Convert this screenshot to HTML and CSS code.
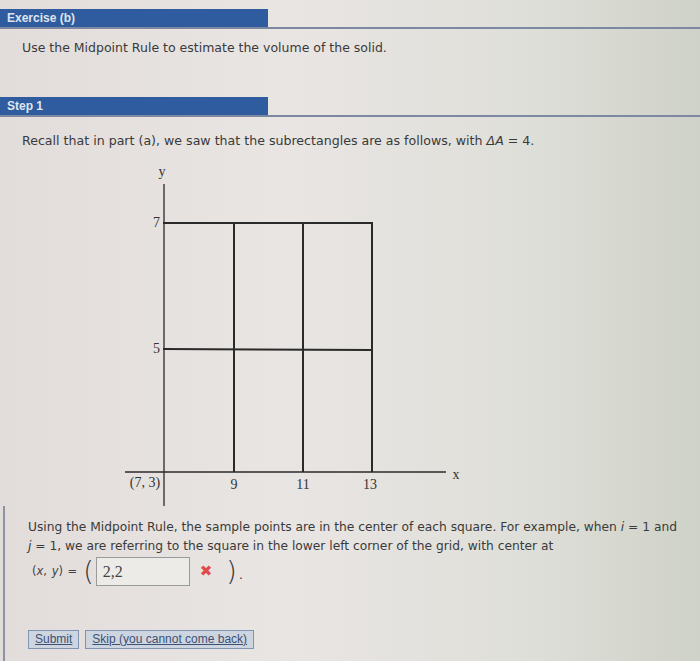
FILE: index.html
```html
<!DOCTYPE html>
<html>
<head>
<meta charset="utf-8">
<link rel="stylesheet" href="styles.css">
</head>
<body>
<div class="page">
  <div class="head"><div class="bar">Exercise (b)</div></div>
  <p class="intro">Use the Midpoint Rule to estimate the volume of the solid.</p>

  <div class="head step"><div class="bar">Step 1</div></div>
  <p class="recall">Recall that in part (a), we saw that the subrectangles are as follows, with <i>ΔA</i> = 4.</p>

  <svg class="graph" width="700" height="346" viewBox="0 160 700 346">
    <g stroke="#2a2a2a" fill="none">
      <line x1="164" y1="184" x2="164" y2="506" stroke-width="1.3"/>
      <line x1="125" y1="472" x2="446" y2="472" stroke-width="1.3"/>
      <line x1="163" y1="223" x2="373" y2="223" stroke-width="2"/>
      <line x1="163" y1="349" x2="372" y2="350" stroke-width="2"/>
      <line x1="234" y1="223" x2="234" y2="472" stroke-width="2"/>
      <line x1="303" y1="223" x2="303" y2="472" stroke-width="2"/>
      <line x1="372" y1="223" x2="372" y2="472" stroke-width="2"/>
    </g>
    <g class="lbl" fill="#333">
      <text x="162" y="176" text-anchor="middle">y</text>
      <text x="456" y="479" text-anchor="middle">x</text>
      <text x="160" y="227" text-anchor="end">7</text>
      <text x="160" y="353" text-anchor="end">5</text>
      <text x="145" y="487" text-anchor="middle">(7, 3)</text>
      <text x="234" y="489" text-anchor="middle">9</text>
      <text x="303" y="489" text-anchor="middle">11</text>
      <text x="370" y="489" text-anchor="middle">13</text>
    </g>
  </svg>

  <div class="lower">
    <p class="using">Using the Midpoint Rule, the sample points are in the center of each square. For example, when <i>i</i> = 1 and<br><i>j</i> = 1, we are referring to the square in the lower left corner of the grid, with center at</p>
    <div class="answer">
      <span class="xy">(<i>x</i>, <i>y</i>) =</span>
      <span class="paren">(</span>
      <span class="input">2,2</span>
      <span class="wrong">✖</span>
      <span class="paren">)</span><span class="dot">.</span>
    </div>
    <div class="buttons">
      <span class="btn">Submit</span>
      <span class="btn">Skip (you cannot come back)</span>
    </div>
  </div>
</div>
</body>
</html>
```
FILE: styles.css
```css
html, body {
  margin: 0;
  padding: 0;
}
body {
  width: 700px;
  height: 661px;
  overflow: hidden;
  background: linear-gradient(to right, #e2dddb 0%, #e9e5e3 40%, #dfdfd9 75%, #cfd2c8 100%);
  font-family: "DejaVu Sans", Verdana, sans-serif;
  color: #3a3a3a;
}
.page {
  padding-top: 9px;
}
.head {
  border-bottom: 2px solid #7f88a2;
}
.bar {
  width: 261px;
  height: 18px;
  background: #2f5c9f;
  color: #dfe5ef;
  font-family: "Liberation Sans", Arial, sans-serif;
  font-weight: bold;
  font-size: 12px;
  line-height: 19px;
  padding-left: 7px;
}
.intro {
  margin: 0;
  padding: 11px 0 0 22px;
  font-size: 12.5px;
  line-height: 16px;
  height: 57px;
}
.recall {
  margin: 0;
  padding: 16px 0 0 22px;
  font-size: 12.6px;
  line-height: 16px;
}
.graph {
  display: block;
  margin-top: 11px;
}
.lbl text {
  font-family: "Liberation Serif", "Times New Roman", serif;
  font-size: 14px;
}
.lower {
  margin-left: 3px;
  border-left: 2px solid #8d93a3;
  padding-left: 23px;
  padding-bottom: 12px;
}
.using {
  margin: 0;
  padding-top: 12px;
  font-size: 12.25px;
  line-height: 19px;
  white-space: nowrap;
}
.answer {
  display: flex;
  align-items: center;
  margin-top: 0;
  height: 30px;
}
.xy {
  font-size: 11.5px;
  color: #444;
  margin-left: 4px;
  word-spacing: 1px;
}
.paren {
  font-family: "DejaVu Sans", sans-serif;
  font-size: 27px;
  font-weight: 200;
  line-height: 30px;
  color: #333;
  margin: 0 2px 0 6px;
}
.input {
  width: 86px;
  height: 27px;
  border: 1px solid #9a9a9a;
  background: #ecebe8;
  font-family: "Liberation Serif", serif;
  font-size: 16px;
  line-height: 27px;
  padding-left: 6px;
  color: #444;
}
.wrong {
  color: #e04a4a;
  font-size: 15px;
  margin: 0 8px 0 10px;
}
.dot {
  font-size: 12px;
  margin-top: 8px;
}
.buttons {
  display: flex;
  gap: 6px;
  margin-top: 44px;
}
.btn {
  font-family: "Liberation Sans", Arial, sans-serif;
  font-size: 12px;
  color: #3e5073;
  text-decoration: underline;
  background: #cdd5e0;
  border: 1px solid #8095b5;
  padding: 1px 6px;
  line-height: 15px;
}
```
